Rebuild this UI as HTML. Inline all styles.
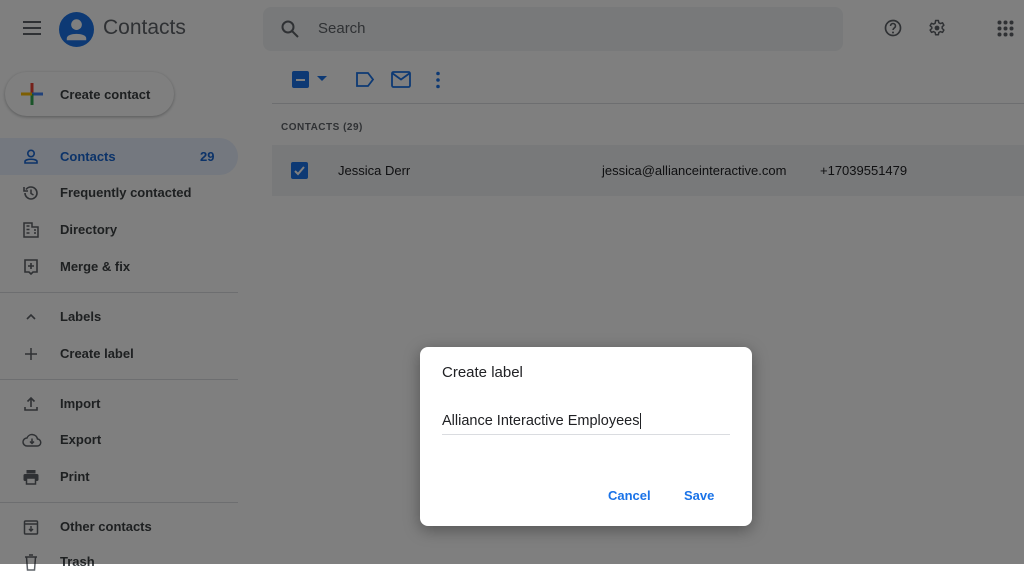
<!DOCTYPE html>
<html><head><meta charset="utf-8"><style>
*{box-sizing:border-box;margin:0;padding:0}
body{width:1024px;height:564px;overflow:hidden;background:#fff;font-family:"Liberation Sans",Arial,sans-serif;color:#202124;position:relative}
.a{position:absolute}
.nav{position:absolute;left:0;width:238px;height:37px;display:flex;align-items:center;font-size:13px;font-weight:bold;color:#3c4043}
.nav svg{position:absolute;left:22px}
.nav span{position:absolute;left:60px}
.hr{position:absolute;left:0;width:238px;height:1px;background:#dadce0}
#ov{position:absolute;left:0;top:0;width:1024px;height:564px;background:rgba(0,0,0,0.5)}
</style></head><body>
<svg class="a" style="left:22px;top:20px" width="20" height="16" viewBox="0 0 20 16"><path d="M1 2h18M1 8h18M1 14h18" stroke="#5f6368" stroke-width="2"/></svg>
<svg class="a" style="left:59px;top:12px" width="35" height="35" viewBox="0 0 36 36"><circle cx="18" cy="18" r="18" fill="#1a73e8"/><circle cx="18" cy="13" r="5.5" fill="#fff"/><path d="M8 27c0-6 20-6 20 0v2H8z" fill="#fff"/></svg>
<div class="a" style="left:103px;top:16px;font-size:21px;color:#5f6368">Contacts</div>
<div class="a" style="left:263px;top:7px;width:580px;height:44px;background:#f1f3f4;border-radius:8px"></div>
<svg class="a" style="left:280px;top:19px" width="20" height="20" viewBox="0 0 20 20"><circle cx="8" cy="8" r="5.5" fill="none" stroke="#5f6368" stroke-width="2"/><path d="M12 12l6 6" stroke="#5f6368" stroke-width="2"/></svg>
<div class="a" style="left:318px;top:20px;font-size:15px;color:#5f6368">Search</div>
<svg class="a" style="left:884px;top:19px" width="18" height="18" viewBox="0 0 18 18"><circle cx="9" cy="9" r="7.5" fill="none" stroke="#5f6368" stroke-width="1.7"/><path d="M6.5 7a2.5 2.5 0 115 0c0 2-2.5 2-2.5 4" fill="none" stroke="#5f6368" stroke-width="1.6"/><circle cx="9" cy="13.5" r="1" fill="#5f6368"/></svg>
<svg class="a" style="left:928px;top:19px" width="18" height="18" viewBox="0 0 18 18"><path d="M7.6 1.5h2.8l.4 2.2 1.6.9 2.1-.8 1.4 2.4-1.7 1.5v1.8l1.7 1.5-1.4 2.4-2.1-.8-1.6.9-.4 2.2H7.6l-.4-2.2-1.6-.9-2.1.8-1.4-2.4 1.7-1.5V8.2L2.1 6.7l1.4-2.4 2.1.8 1.6-.9z" fill="none" stroke="#5f6368" stroke-width="1.5" stroke-linejoin="round"/><circle cx="9" cy="9" r="2.4" fill="#5f6368"/></svg>
<svg class="a" style="left:997px;top:20px" width="17" height="17" viewBox="0 0 17 17" fill="#5f6368"><circle cx="2.5" cy="2.5" r="2"/><circle cx="8.5" cy="2.5" r="2"/><circle cx="14.5" cy="2.5" r="2"/><circle cx="2.5" cy="8.5" r="2"/><circle cx="8.5" cy="8.5" r="2"/><circle cx="14.5" cy="8.5" r="2"/><circle cx="2.5" cy="14.5" r="2"/><circle cx="8.5" cy="14.5" r="2"/><circle cx="14.5" cy="14.5" r="2"/></svg>
<div class="a" style="left:5px;top:72px;width:169px;height:44px;border-radius:22px;background:#fff;box-shadow:0 1px 3px rgba(60,64,67,.4)"></div>
<svg class="a" style="left:21px;top:83px" width="22" height="22" viewBox="0 0 22 22"><rect x="9.5" y="0" width="3" height="11" fill="#ea4335"/><rect x="11" y="9.5" width="11" height="3" fill="#4285f4"/><rect x="9.5" y="11" width="3" height="11" fill="#34a853"/><rect x="0" y="9.5" width="11" height="3" fill="#fbbc04"/></svg>
<div class="a" style="left:60px;top:87px;font-size:13px;font-weight:bold;color:#3c4043">Create contact</div>
<div class="a" style="left:0;top:138px;width:238px;height:37px;background:#e8f0fe;border-radius:0 19px 19px 0"></div>
<div class="nav" style="top:138px;color:#1967d2"><svg width="18" height="18" viewBox="0 0 18 18"><circle cx="9" cy="5.5" r="3.2" fill="none" stroke="#1967d2" stroke-width="1.6"/><path d="M3 15v-1.5c0-3 12-3 12 0V15z" fill="none" stroke="#1967d2" stroke-width="1.6"/></svg><span>Contacts</span><span style="left:200px">29</span></div>
<div class="nav" style="top:174px"><svg width="18" height="18" viewBox="0 0 18 18"><path d="M3 9a6 6 0 106-6 6 6 0 00-5 2.5" fill="none" stroke="#5f6368" stroke-width="1.6"/><path d="M2 3v4h4" fill="none" stroke="#5f6368" stroke-width="1.6"/><path d="M9 5.5v4l2.5 1.5" fill="none" stroke="#5f6368" stroke-width="1.5"/></svg><span>Frequently contacted</span></div>
<div class="nav" style="top:211px"><svg width="18" height="18" viewBox="0 0 18 18"><path d="M2 16V2h8v4h6v10z" fill="none" stroke="#5f6368" stroke-width="1.5"/><path d="M4.5 5h3M4.5 8.5h3M4.5 12h3M12 9h2M12 12h2" stroke="#5f6368" stroke-width="1.5"/></svg><span>Directory</span></div>
<div class="nav" style="top:248px"><svg width="18" height="18" viewBox="0 0 18 18"><path d="M3 2h12v12h-4l-2 2-2-2H3z" fill="none" stroke="#5f6368" stroke-width="1.6"/><path d="M9 5v6M6 8h6" stroke="#5f6368" stroke-width="1.6"/></svg><span>Merge &amp; fix</span></div>
<div class="hr" style="top:292px"></div>
<div class="nav" style="top:298px"><svg width="18" height="18" viewBox="0 0 18 18"><path d="M5 11l4-4 4 4" fill="none" stroke="#5f6368" stroke-width="1.6"/></svg><span>Labels</span></div>
<div class="nav" style="top:335px"><svg width="18" height="18" viewBox="0 0 18 18"><path d="M9 3v12M3 9h12" stroke="#5f6368" stroke-width="1.5"/></svg><span>Create label</span></div>
<div class="hr" style="top:379px"></div>
<div class="nav" style="top:385px"><svg width="18" height="18" viewBox="0 0 18 18"><path d="M3 12v3h12v-3M9 12V3M5.5 6.5L9 3l3.5 3.5" fill="none" stroke="#5f6368" stroke-width="1.6"/></svg><span>Import</span></div>
<div class="nav" style="top:421px"><svg width="20" height="18" viewBox="0 0 20 18"><path d="M5 15a4 4 0 010-8 5.5 5.5 0 0110.5 1A3.5 3.5 0 0115 15z" fill="none" stroke="#5f6368" stroke-width="1.5"/><path d="M10 7.5v5M8 10.5l2 2 2-2" fill="none" stroke="#5f6368" stroke-width="1.5"/></svg><span>Export</span></div>
<div class="nav" style="top:458px"><svg width="18" height="18" viewBox="0 0 18 18"><rect x="1.5" y="6" width="15" height="7" rx="1.5" fill="#5f6368"/><rect x="4.5" y="2" width="9" height="3.5" fill="#5f6368"/><rect x="4.5" y="10" width="9" height="6" fill="#fff" stroke="#5f6368" stroke-width="1.5"/></svg><span>Print</span></div>
<div class="hr" style="top:502px"></div>
<div class="nav" style="top:508px"><svg width="18" height="18" viewBox="0 0 18 18"><rect x="2.5" y="3" width="13" height="13" rx="1" fill="none" stroke="#5f6368" stroke-width="1.5"/><path d="M2.5 6h13M9 8v5M7 11l2 2 2-2" fill="none" stroke="#5f6368" stroke-width="1.4"/></svg><span>Other contacts</span></div>
<div class="nav" style="top:543px"><svg width="18" height="18" viewBox="0 0 18 18"><path d="M3 4h12M7 2h4M4.5 4l1 13h7l1-13" fill="none" stroke="#5f6368" stroke-width="1.5"/></svg><span>Trash</span></div>
<div class="a" style="left:292px;top:71px;width:17px;height:17px;background:#1a73e8;border-radius:2px"></div>
<div class="a" style="left:296px;top:78.5px;width:9px;height:2px;background:#fff"></div>
<svg class="a" style="left:317px;top:76px" width="10" height="6"><path d="M0 0h10L5 5z" fill="#1a73e8"/></svg>
<svg class="a" style="left:355px;top:71px" width="20" height="17" viewBox="0 0 20 17"><path d="M2 2h11l5 6.5-5 6.5H2z" fill="none" stroke="#1a73e8" stroke-width="1.8"/></svg>
<svg class="a" style="left:391px;top:71px" width="20" height="17" viewBox="0 0 20 17"><rect x="1" y="1" width="18" height="15" rx="1.5" fill="none" stroke="#1a73e8" stroke-width="1.8"/><path d="M1 2l9 6.5L19 2" fill="none" stroke="#1a73e8" stroke-width="1.8"/></svg>
<svg class="a" style="left:435px;top:71px" width="6" height="18"><circle cx="3" cy="2.5" r="1.8" fill="#1a73e8"/><circle cx="3" cy="9" r="1.8" fill="#1a73e8"/><circle cx="3" cy="15.5" r="1.8" fill="#1a73e8"/></svg>
<div class="a" style="left:272px;top:103px;width:752px;height:1px;background:#dadce0"></div>
<div class="a" style="left:281px;top:122px;font-size:10px;font-weight:bold;color:#5f6368;letter-spacing:.5px">CONTACTS (29)</div>
<div class="a" style="left:272px;top:145px;width:752px;height:51px;background:#f1f3f4"></div>
<div class="a" style="left:291px;top:162px;width:17px;height:17px;background:#1a73e8;border-radius:2px"></div>
<svg class="a" style="left:291px;top:162px" width="17" height="17"><path d="M4 9l3 3 6-7" fill="none" stroke="#fff" stroke-width="2"/></svg>
<div class="a" style="left:338px;top:163px;font-size:13px">Jessica Derr</div>
<div class="a" style="left:602px;top:163px;font-size:13px">jessica@allianceinteractive.com</div>
<div class="a" style="left:820px;top:163px;font-size:13px">+17039551479</div>
<div id="ov"></div>
<div class="a" style="left:420px;top:347px;width:332px;height:179px;background:#fff;border-radius:8px;box-shadow:0 4px 16px rgba(0,0,0,.35)">
<div class="a" style="left:22px;top:17px;font-size:15px;color:#202124">Create label</div>
<div class="a" style="left:22px;top:66px;font-size:14.5px;color:#202124">Alliance Interactive Employees<span style="border-left:1px solid #202124;margin-left:1px"></span></div>
<div class="a" style="left:22px;top:87px;width:288px;height:1px;background:#dadce0"></div>
<div class="a" style="left:188px;top:141px;font-size:13px;font-weight:bold;color:#1a73e8">Cancel</div>
<div class="a" style="left:264px;top:141px;font-size:13px;font-weight:bold;color:#1a73e8">Save</div>
</div>
</body></html>
